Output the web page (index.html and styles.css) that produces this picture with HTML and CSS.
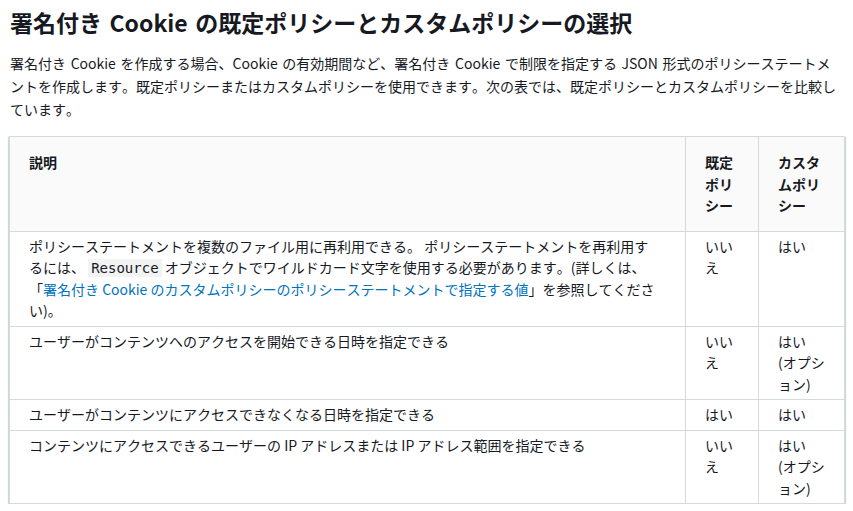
FILE: index.html
```html
<!DOCTYPE html>
<html lang="ja">
<head>
<meta charset="utf-8">
<title>署名付き Cookie の既定ポリシーとカスタムポリシーの選択</title>
<link rel="stylesheet" href="styles.css">
</head>
<body>
<main class="page">
  <h1 class="title">署名付き Cookie の既定ポリシーとカスタムポリシーの選択</h1>
  <p class="intro">署名付き Cookie を作成する場合、Cookie の有効期間など、署名付き Cookie で制限を指定する JSON 形式のポリシーステートメントを作成します。既定ポリシーまたはカスタムポリシーを使用できます。次の表では、既定ポリシーとカスタムポリシーを比較しています。</p>
  <table class="compare">
    <colgroup>
      <col class="col-desc">
      <col class="col-canned">
      <col class="col-custom">
    </colgroup>
    <thead>
      <tr>
        <th>説明</th>
        <th>既定ポリシー</th>
        <th>カスタムポリシー</th>
      </tr>
    </thead>
    <tbody>
      <tr>
        <td>ポリシーステートメントを複数のファイル用に再利用できる。 ポリシーステートメントを再利用するには、 <code class="code">Resource</code> オブジェクトでワイルドカード文字を使用する必要があります。(詳しくは、「<a class="link" href="#">署名付き Cookie のカスタムポリシーのポリシーステートメントで指定する値</a>」を参照してください)。</td>
        <td>いいえ</td>
        <td>はい</td>
      </tr>
      <tr>
        <td>ユーザーがコンテンツへのアクセスを開始できる日時を指定できる</td>
        <td>いいえ</td>
        <td>はい (オプション)</td>
      </tr>
      <tr>
        <td>ユーザーがコンテンツにアクセスできなくなる日時を指定できる</td>
        <td>はい</td>
        <td>はい</td>
      </tr>
      <tr>
        <td>コンテンツにアクセスできるユーザーの IP アドレスまたは IP アドレス範囲を指定できる</td>
        <td>いいえ</td>
        <td>はい (オプション)</td>
      </tr>
    </tbody>
  </table>
</main>
</body>
</html>
```

FILE: styles.css
```css
html, body {
  margin: 0;
  padding: 0;
  background: #ffffff;
}

body {
  font-family: "Noto Sans CJK JP", "Noto Sans", sans-serif;
  font-size: 14px;
  color: #16191f;
  line-break: normal;
  font-kerning: none;
  text-spacing-trim: space-all;
}

.page {
  padding: 7px 9px 0 9px;
  width: 835px;
}

.title {
  margin: 0 0 0 1px;
  font-size: 23px;
  line-height: 30px;
  font-weight: 700;
  word-spacing: 0.1em;
}

.intro {
  margin: 15px 0 0 1px;
  width: 828px;
  line-height: 23px;
  word-spacing: 1.5px;
}

.compare {
  margin-top: 15px;
  width: 835px;
  table-layout: fixed;
  border-collapse: collapse;
  border: 1px solid #d5dbdb;
  box-shadow: 0 1px 1px 0 rgba(0, 28, 36, 0.35), 1px 1px 1px 0 rgba(0, 28, 36, 0.12), -1px 1px 1px 0 rgba(0, 28, 36, 0.12);
}

.col-desc { width: 676px; }
.col-canned { width: 73px; }
.col-custom { width: 86px; }

.compare th,
.compare td {
  border: 1px solid #d5dbdb;
  text-align: left;
  vertical-align: top;
  line-height: 21.5px;
}

.compare th {
  background: #fafafa;
  font-weight: 700;
  padding: 15px 18px 14px 19px;
}

.compare td {
  padding: 4px 18px 4px 19px;
}

.compare td:first-child,
.compare th:first-child {
  padding-right: 27px;
}

.code {
  font-family: "DejaVu Sans Mono", "Liberation Mono", monospace;
  font-size: 14px;
  line-height: 1;
  background: #f2f3f3;
  padding: 1px 3px;
}

.link {
  color: #0073bb;
  text-decoration: none;
}
```
